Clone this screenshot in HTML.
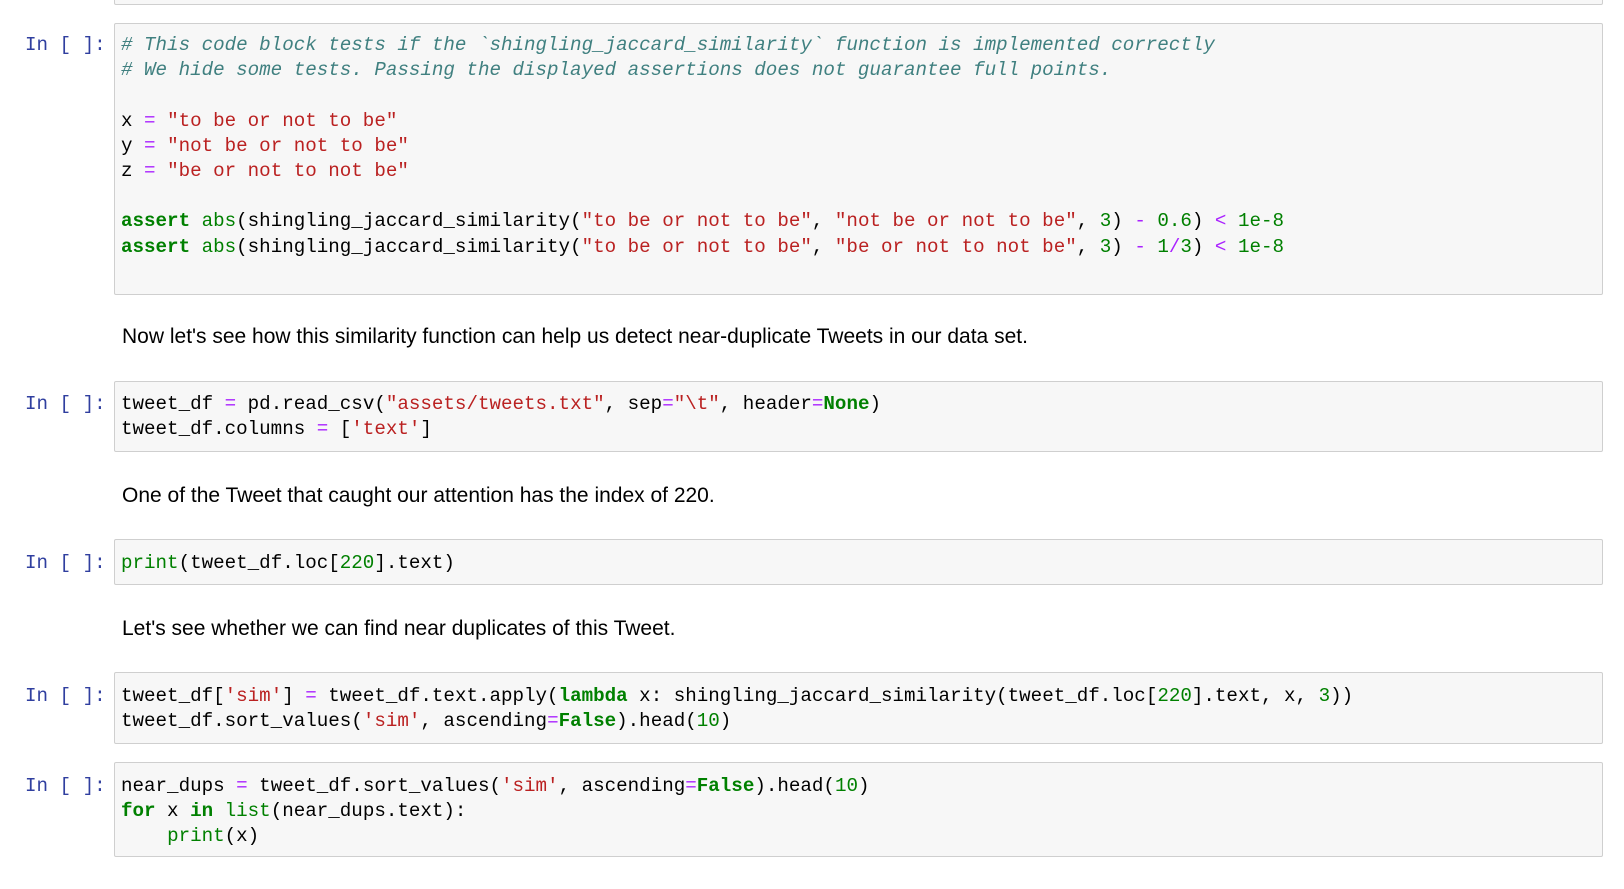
<!DOCTYPE html>
<html><head><meta charset="utf-8"><style>
body{margin:0;background:#fff;width:1624px;height:889px;overflow:hidden;position:relative;font-family:"Liberation Sans",Arial,sans-serif}
.box{position:absolute;left:114px;width:1489px;background:#f7f7f7;border:1px solid #cfcfcf;border-radius:2px;box-sizing:border-box}
.code{position:absolute;left:121px;font-family:"Liberation Mono",monospace;font-size:19.2px;line-height:25.2px;white-space:pre;color:#000}
.p{position:absolute;left:25px;font-family:"Liberation Mono",monospace;font-size:19.2px;line-height:25.2px;color:#303F9F;white-space:pre}
.md{position:absolute;left:122px;font-size:21px;line-height:24px;color:#000}
.c{color:#408080;font-style:italic}.s{color:#BA2121}.o{color:#AA22FF}.k{color:#008000;font-weight:bold}.b{color:#008000}.n{color:#008000}
</style></head><body>
<div class="box" style="top:-10px;height:15px"></div>

<div class="box" style="top:23px;height:272px"></div>
<div class="p" style="top:33px">In [ ]:</div>
<div class="code" style="top:33px"><span class="c"># This code block tests if the `shingling_jaccard_similarity` function is implemented correctly</span>
<span class="c"># We hide some tests. Passing the displayed assertions does not guarantee full points.</span>

x <span class="o">=</span> <span class="s">"to be or not to be"</span>
y <span class="o">=</span> <span class="s">"not be or not to be"</span>
z <span class="o">=</span> <span class="s">"be or not to not be"</span>

<span class="k">assert</span> <span class="b">abs</span>(shingling_jaccard_similarity(<span class="s">"to be or not to be"</span>, <span class="s">"not be or not to be"</span>, <span class="n">3</span>) <span class="o">-</span> <span class="n">0.6</span>) <span class="o">&lt;</span> <span class="n">1e-8</span>
<span class="k">assert</span> <span class="b">abs</span>(shingling_jaccard_similarity(<span class="s">"to be or not to be"</span>, <span class="s">"be or not to not be"</span>, <span class="n">3</span>) <span class="o">-</span> <span class="n">1</span><span class="o">/</span><span class="n">3</span>) <span class="o">&lt;</span> <span class="n">1e-8</span></div>

<div class="md" style="top:325px">Now let's see how this similarity function can help us detect near-duplicate Tweets in our data set.</div>

<div class="box" style="top:381px;height:71px"></div>
<div class="p" style="top:392px">In [ ]:</div>
<div class="code" style="top:392px">tweet_df <span class="o">=</span> pd.read_csv(<span class="s">"assets/tweets.txt"</span>, sep<span class="o">=</span><span class="s">"\t"</span>, header<span class="o">=</span><span class="k">None</span>)
tweet_df.columns <span class="o">=</span> [<span class="s">'text'</span>]</div>

<div class="md" style="top:484px">One of the Tweet that caught our attention has the index of 220.</div>

<div class="box" style="top:539px;height:46px"></div>
<div class="p" style="top:551px">In [ ]:</div>
<div class="code" style="top:551px"><span class="b">print</span>(tweet_df.loc[<span class="n">220</span>].text)</div>

<div class="md" style="top:617px">Let's see whether we can find near duplicates of this Tweet.</div>

<div class="box" style="top:672px;height:72px"></div>
<div class="p" style="top:684px">In [ ]:</div>
<div class="code" style="top:684px">tweet_df[<span class="s">'sim'</span>] <span class="o">=</span> tweet_df.text.apply(<span class="k">lambda</span> x: shingling_jaccard_similarity(tweet_df.loc[<span class="n">220</span>].text, x, <span class="n">3</span>))
tweet_df.sort_values(<span class="s">'sim'</span>, ascending<span class="o">=</span><span class="k">False</span>).head(<span class="n">10</span>)</div>

<div class="box" style="top:762px;height:95px"></div>
<div class="p" style="top:774px">In [ ]:</div>
<div class="code" style="top:774px">near_dups <span class="o">=</span> tweet_df.sort_values(<span class="s">'sim'</span>, ascending<span class="o">=</span><span class="k">False</span>).head(<span class="n">10</span>)
<span class="k">for</span> x <span class="k">in</span> <span class="b">list</span>(near_dups.text):
    <span class="b">print</span>(x)</div>
</body></html>
